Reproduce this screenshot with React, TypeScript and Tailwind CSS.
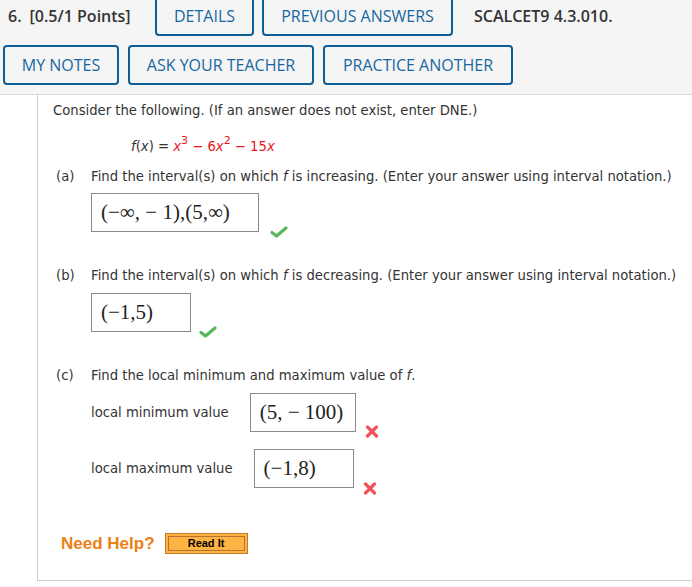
import React from "react";

const body = { fontFamily: '"DejaVu Sans", Verdana, sans-serif' };
const head = { fontFamily: '"Open Sans", "Liberation Sans", sans-serif' };
const math = { fontFamily: '"Liberation Serif", "DejaVu Serif", serif' };

function Btn({ label, w }: { label: string; w: string }) {
  return (
    <div
      className={`${w} h-10 shrink-0 flex items-center justify-center border-2 border-[#0d5f96] rounded-[4px] text-[16px] font-medium text-[#1767a0] bg-[#f5f5f5]`}
    >
      {label}
    </div>
  );
}

function Check() {
  return (
    <svg className="block" width="18" height="12" viewBox="0 0 18 12">
      <path
        d="M2 6.5 L6.5 10 L16 2"
        fill="none"
        stroke="#5bb55b"
        strokeWidth="3.2"
        strokeLinecap="round"
        strokeLinejoin="round"
      />
    </svg>
  );
}

function Cross() {
  return (
    <svg className="block" width="14" height="13" viewBox="0 0 14 13">
      <path
        d="M2.5 2 L11.5 11 M11.5 2 L2.5 11"
        fill="none"
        stroke="#f2535b"
        strokeWidth="3.2"
        strokeLinecap="round"
      />
    </svg>
  );
}

function AnswerBox({ children, w }: { children: React.ReactNode; w: string }) {
  return (
    <div
      className={`${w} h-[39px] shrink-0 border border-[#8a8a8a] flex items-center pl-[9px] text-[21px] text-[#222] bg-white`}
      style={math}
    >
      {children}
    </div>
  );
}

export default function App() {
  return (
    <div className="w-[692px] min-h-[587px] bg-white overflow-hidden">
      <div className="flex flex-col bg-[#f5f5f5] h-[95px] border-b border-[#dcdcdc]" style={head}>
        <div className="flex items-center -mt-1 h-10">
          <div className="flex items-center text-[16px] font-semibold text-[#333] w-[155px] pl-[8px]">
            <span>6.</span>
            <span className="ml-[8px]">[0.5/1 Points]</span>
          </div>
          <Btn label="DETAILS" w="w-[99px]" />
          <div className="w-[8px]" />
          <Btn label="PREVIOUS ANSWERS" w="w-[191px]" />
          <span className="ml-[21px] text-[16px] font-semibold text-[#333]">SCALCET9 4.3.010.</span>
        </div>
        <div className="flex items-center gap-[9px] pl-[3px] mt-[9px]">
          <Btn label="MY NOTES" w="w-[116px]" />
          <Btn label="ASK YOUR TEACHER" w="w-[186px]" />
          <Btn label="PRACTICE ANOTHER" w="w-[190px]" />
        </div>
      </div>

      <div
        className="ml-[37px] border-l border-b border-[#cccccc] pl-[15px] pt-[6px] pb-[26px] text-[13.2px] text-[#333]"
        style={body}
      >
        <div className="leading-5">Consider the following. (If an answer does not exist, enter DNE.)</div>
        <div className="leading-5 mt-4 ml-[78px]">
          <i>f</i>(<i>x</i>) ={" "}
          <span className="text-[#e8161b]">
            <i>x</i>
            <sup className="text-[11px] top-[-7px]">3</sup> − 6<i>x</i>
            <sup className="text-[11px] top-[-7px]">2</sup> − 15<i>x</i>
          </span>
        </div>

        <div className="flex leading-5 mt-[10px]">
          <span className="w-[38px] pl-[3px]">(a)</span>
          <span>
            Find the interval(s) on which <i>f</i> is increasing. (Enter your answer using interval notation.)
          </span>
        </div>
        <div className="flex items-start h-[39px] ml-[38px] mt-[6px]">
          <AnswerBox w="w-[168px]">(−∞, − 1),(5,∞)</AnswerBox>
          <div className="ml-[11px] mt-[33px]">
            <Check />
          </div>
        </div>

        <div className="flex leading-5 mt-[34px]">
          <span className="w-[38px] pl-[3px]">(b)</span>
          <span>
            Find the interval(s) on which <i>f</i> is decreasing. (Enter your answer using interval notation.)
          </span>
        </div>
        <div className="flex items-start h-[39px] ml-[38px] mt-[7px]">
          <AnswerBox w="w-[100px]">(−1,5)</AnswerBox>
          <div className="ml-[8px] mt-[33px]">
            <Check />
          </div>
        </div>

        <div className="flex leading-5 mt-[34px]">
          <span className="w-[38px] pl-[3px]">(c)</span>
          <span>
            Find the local minimum and maximum value of <i>f</i>.
          </span>
        </div>
        <div className="flex items-start h-[39px] ml-[38px] mt-[7px]">
          <span className="leading-[39px] mr-[21px]">local minimum value</span>
          <AnswerBox w="w-[106px]">(5, − 100)</AnswerBox>
          <div className="ml-[9px] mt-[32px]">
            <Cross />
          </div>
        </div>
        <div className="flex items-start h-[39px] ml-[38px] mt-[17px]">
          <span className="leading-[39px] mr-[21px]">local maximum value</span>
          <AnswerBox w="w-[100px]">(−1,8)</AnswerBox>
          <div className="ml-[9px] mt-[33px]">
            <Cross />
          </div>
        </div>

        <div
          className="flex items-center h-[21px] mt-[45px] ml-[8px]"
          style={{ fontFamily: '"Liberation Sans", Arial, sans-serif' }}
        >
          <span className="text-[17px] font-bold text-[#ec7f12]">Need Help?</span>
          <div className="ml-[10px] w-[83px] h-[21px] border border-[#c8782a] bg-[#fdb443] p-[2px]">
            <div className="h-full border border-[#b87330] flex items-center justify-center text-[11px] font-bold text-black">
              Read It
            </div>
          </div>
        </div>
      </div>
    </div>
  );
}
